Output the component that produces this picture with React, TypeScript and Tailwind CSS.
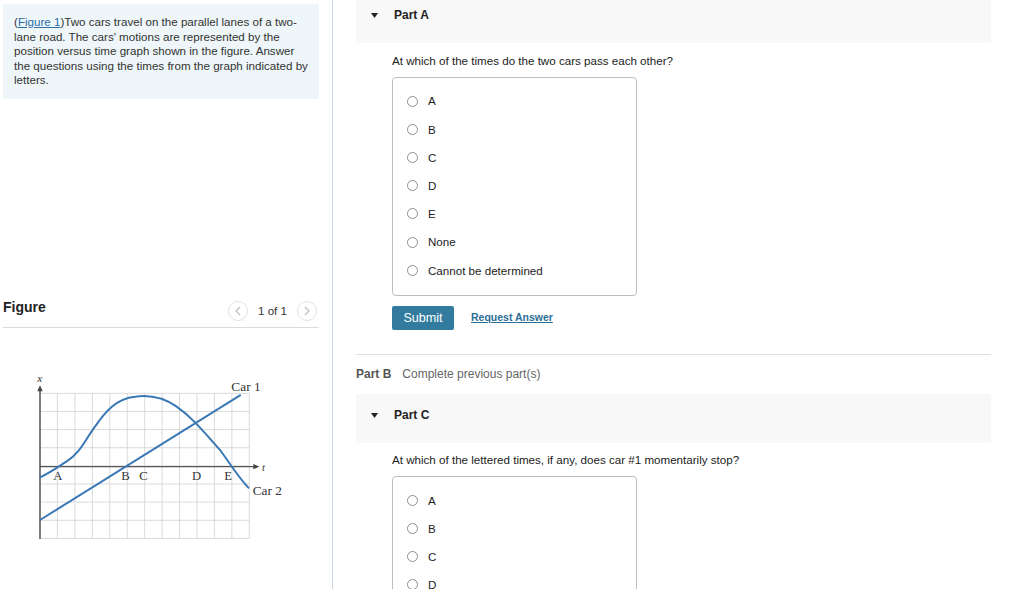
const font = { fontFamily: '"Liberation Sans", Arial, Helvetica, sans-serif' };

function Radio({ label }: { label: string }) {
  return (
    <div className="flex h-[28.2px] items-center">
      <span className="box-border h-[11px] w-[11px] rounded-full border border-[#8f8f8f] bg-white" />
      <span className="ml-[10px] text-[11.6px] text-[#222]">{label}</span>
    </div>
  );
}

function PartHeader({ title }: { title: string }) {
  return (
    <div className="flex h-[49px] items-start bg-[#f8f8f8] pl-[15px] pt-[13px]">
      <svg width="7" height="5" viewBox="0 0 7 5" className="mt-[6px]">
        <path d="M0 0 L7 0 L3.5 5 Z" fill="#222" />
      </svg>
      <span className="ml-[16px] text-[12px] font-bold leading-[16px] text-[#222]">{title}</span>
    </div>
  );
}

function Graph() {
  const vx = Array.from({ length: 13 }, (_, i) => 60 + i * 52.33);
  const hy = Array.from({ length: 9 }, (_, i) => 100 + i * 54.4);
  const serif = '"Liberation Serif", "Times New Roman", serif';
  return (
    <svg width="300" height="190" viewBox="0 0 900 570">
      {vx.map((x) => (
        <line key={"v" + x} x1={x} y1={100} x2={x} y2={535} stroke="#d2d2d2" strokeWidth="2.5" />
      ))}
      {hy.map((y) => (
        <line key={"h" + y} x1={60} y1={y} x2={688} y2={y} stroke="#d2d2d2" strokeWidth="2.5" />
      ))}
      <line x1={60} y1={537} x2={60} y2={90} stroke="#444" strokeWidth="4" />
      <path d="M60 76 L52 94 L68 94 Z" fill="#444" />
      <line x1={60} y1={320} x2={704} y2={320} stroke="#555" strokeWidth="4" />
      <path d="M718 320 L700 312 L700 328 Z" fill="#444" />
      <text x="52" y="66" fontFamily={serif} fontStyle="italic" fontSize="34" fill="#333">x</text>
      <text x="726" y="332" fontFamily={serif} fontStyle="italic" fontSize="32" fill="#333">t</text>
      <line x1={60} y1={480} x2={660} y2={106} stroke="#3a78b5" strokeWidth="6" strokeLinecap="round" />
      <path
        d="M60 352 C 90 338, 112 322, 140 304 C 180 280, 195 240, 225 200 C 255 155, 290 115, 345 110 C 390 104, 430 112, 470 140 C 520 175, 555 220, 600 270 C 630 310, 650 345, 685 383"
        fill="none"
        stroke="#3a78b5"
        strokeWidth="6"
        strokeLinecap="round"
      />
      <g fontFamily={serif} fontSize="38" fill="#333">
        <text x="100" y="360">A</text>
        <text x="304" y="360">B</text>
        <text x="358" y="360">C</text>
        <text x="516" y="360">D</text>
        <text x="613" y="360">E</text>
        <text x="634" y="92" fontSize="40">Car 1</text>
        <text x="698" y="405" fontSize="40">Car 2</text>
      </g>
    </svg>
  );
}

function Chevron({ dir }: { dir: "l" | "r" }) {
  return (
    <span className="flex h-[20px] w-[20px] items-center justify-center rounded-full border border-[#e2e2e2] bg-white">
      <svg width="6" height="10" viewBox="0 0 6 10">
        <path
          d={dir === "l" ? "M5 1 L1 5 L5 9" : "M1 1 L5 5 L1 9"}
          fill="none"
          stroke="#bdbdbd"
          strokeWidth="1.2"
        />
      </svg>
    </span>
  );
}

export default function App() {
  const opts = ["A", "B", "C", "D", "E", "None", "Cannot be determined"];
  return (
    <div className="flex h-[589px] w-[1024px] overflow-hidden bg-white" style={font}>
      {/* left column */}
      <div className="w-[333px] shrink-0 border-r border-[#c9d5e0] pl-[3px] pr-[13px]">
        <div className="mt-[4px] bg-[#eef6f9] px-[11px] pb-[11px] pt-[11px] text-[11.6px] leading-[14.5px] text-[#333]">
          (<span className="text-[#2a6ea6] underline">Figure 1</span>)Two cars travel on the parallel lanes of a two-lane road. The cars' motions are represented by the position versus time graph shown in the figure. Answer the questions using the times from the graph indicated by letters.
        </div>
        <div className="mt-[199px] flex h-[30px] items-start justify-between border-b border-[#dcdcdc]">
          <span className="text-[14px] font-bold leading-[18px] text-[#222]">Figure</span>
          <div className="mr-[2px] mt-[3px] flex items-center">
            <Chevron dir="l" />
            <span className="mx-[10px] text-[11.6px] text-[#333]">1 of 1</span>
            <Chevron dir="r" />
          </div>
        </div>
        <div className="ml-[17px] mt-[32px]">
          <Graph />
        </div>
      </div>

      {/* right column */}
      <div className="ml-[23px] mt-[-6px] w-[635px] shrink-0">
        <PartHeader title="Part A" />
        <div className="pl-[36px]">
          <p className="mt-[11px] text-[11.6px] leading-[14px] text-[#222]">
            At which of the times do the two cars pass each other?
          </p>
          <div className="mt-[9px] w-[245px] rounded-[4px] border border-[#bdbdbd] pb-[11px] pl-[14px] pt-[9px]">
            {opts.map((o) => (
              <Radio key={o} label={o} />
            ))}
          </div>
          <div className="mt-[10px] flex items-center">
            <button className="h-[24px] w-[62px] rounded-[2px] bg-[#337b9e] text-[12.6px] text-white">Submit</button>
            <span className="ml-[17px] text-[10.5px] font-bold text-[#2c6e96] underline">Request Answer</span>
          </div>
        </div>
        <div className="mt-[24px] border-t border-[#dedede]" />
        <div className="mt-[11px] flex text-[12px] leading-[16px]">
          <span className="font-bold text-[#555]">Part B</span>
          <span className="ml-[11px] text-[#666]">Complete previous part(s)</span>
        </div>
        <div className="mt-[12px]">
          <PartHeader title="Part C" />
        </div>
        <div className="pl-[36px]">
          <p className="mt-[10px] text-[11.6px] leading-[14px] text-[#222]">
            At which of the lettered times, if any, does car #1 momentarily stop?
          </p>
          <div className="mt-[9px] w-[245px] rounded-[4px] border border-[#bdbdbd] pb-[11px] pl-[14px] pt-[9px]">
            {opts.map((o) => (
              <Radio key={o} label={o} />
            ))}
          </div>
        </div>
      </div>
    </div>
  );
}
